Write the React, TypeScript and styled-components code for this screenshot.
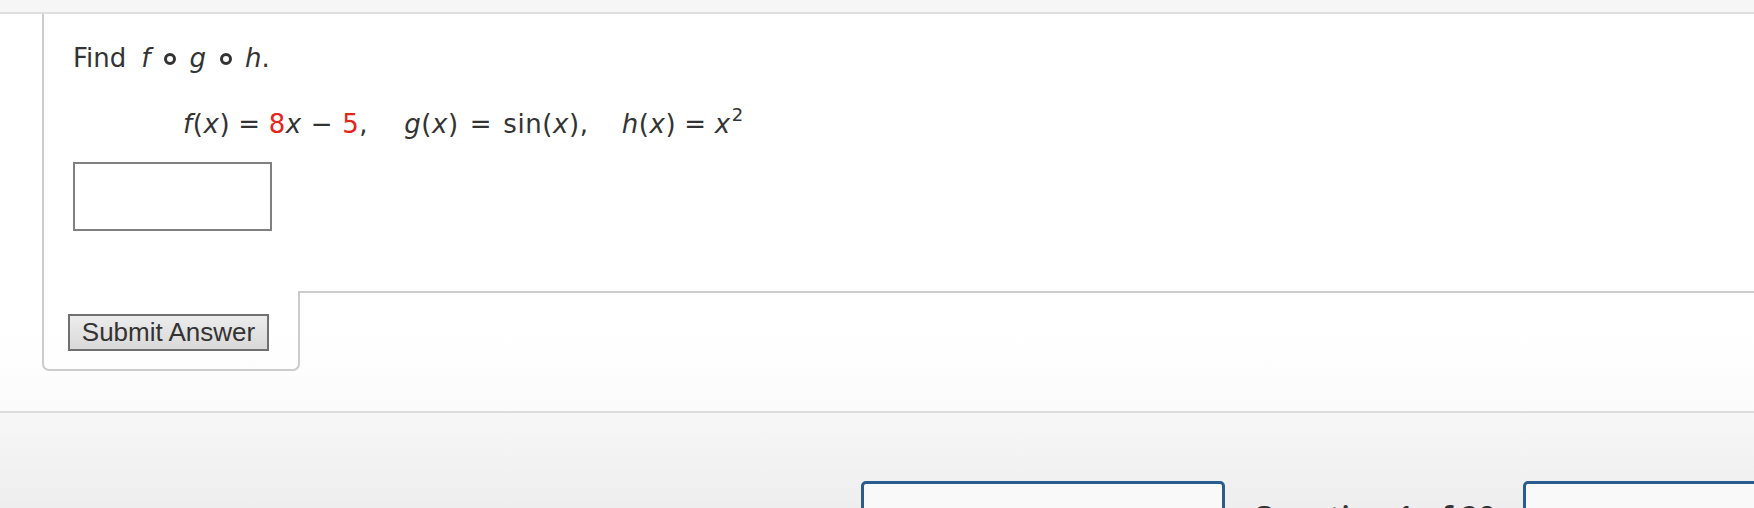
import React from "react";
import styled, { createGlobalStyle } from "styled-components";

const GlobalStyle = createGlobalStyle`
  html, body {
    margin: 0;
    padding: 0;
    background: #ffffff;
    overflow: hidden;
  }
  body {
    font-family: "DejaVu Sans", Verdana, sans-serif;
    color: #333333;
  }
`;

const Page = styled.div`
  width: 1754px;
  height: 508px;
  overflow: hidden;
`;

const TopBand = styled.div`
  height: 12px;
  background: #f6f6f6;
  border-bottom: 2px solid #dedede;
`;

const Main = styled.div`
  padding: 0 0 40px 42px;
  background: linear-gradient(#ffffff 80%, #fbfbfb);
  border-bottom: 2px solid #dcdcdc;
`;

const Card = styled.div`
  display: flex;
  flex-direction: column;
`;

const Question = styled.div`
  box-sizing: border-box;
  height: 277px;
  padding: 26px 0 0 29px;
  border-left: 2px solid #cccccc;
`;

const Prompt = styled.div`
  font-size: 26px;
  line-height: 36px;
  white-space: nowrap;
`;

const Formula = styled.div`
  margin-top: 30px;
  padding-left: 110px;
  font-size: 26px;
  line-height: 36px;
  letter-spacing: 0.6px;
  white-space: nowrap;
`;

const Var = styled.span`
  font-style: italic;
`;

const Red = styled.span`
  color: #e3261b;
`;

const Rel = styled.span<{ $gap?: number }>`
  margin: 0 ${({ $gap }) => $gap ?? 7}px;
`;

const Sep = styled.span<{ $w: number }>`
  display: inline-block;
  width: ${({ $w }) => $w}px;
`;

const Sup = styled.sup`
  font-size: 18px;
  line-height: 0;
  vertical-align: 12px;
  margin-left: 1px;
`;

const Ring = styled.span`
  display: inline-block;
  box-sizing: border-box;
  width: 12px;
  height: 12px;
  border: 3px solid currentColor;
  border-radius: 50%;
  margin: 0 13px 0 14px;
  vertical-align: 2px;
`;

const AnswerInput = styled.input`
  display: block;
  box-sizing: border-box;
  width: 199px;
  height: 69px;
  margin-top: 20px;
  border: 2px solid #808080;
  border-radius: 0;
  background: #ffffff;
  outline: none;
`;

const FooterRow = styled.div`
  display: flex;
  height: 80px;
`;

const SubmitCell = styled.div`
  box-sizing: border-box;
  width: 258px;
  padding: 23px 0 0 24px;
  border: 2px solid #cccccc;
  border-top: none;
  border-radius: 0 0 7px 7px;
`;

const Filler = styled.div`
  flex: 1;
  border-top: 2px solid #cccccc;
`;

const SubmitButton = styled.button`
  box-sizing: border-box;
  width: 201px;
  height: 37px;
  padding: 0;
  border: 2px solid #707070;
  border-radius: 0;
  background: linear-gradient(#ececec, #d9d9d9);
  color: #333333;
  font-family: "Liberation Sans", Arial, sans-serif;
  font-size: 26px;
  line-height: 33px;
`;

const Footer = styled.div`
  display: flex;
  align-items: flex-start;
  gap: 27px;
  height: 95px;
  box-sizing: border-box;
  padding: 68px 0 0 861px;
  background: linear-gradient(#f7f7f7, #eeeeee);
  overflow: hidden;
`;

const NavButton = styled.button`
  flex-shrink: 0;
  box-sizing: border-box;
  width: 364px;
  height: 70px;
  padding: 17px 36px 0;
  border: 3px solid #2a5d8f;
  border-radius: 5px;
  background: #f9f9f9;
  color: #444444;
  font-family: "Liberation Sans", Arial, sans-serif;
  font-size: 24px;
  line-height: 24px;
  text-align: center;
  white-space: nowrap;
`;

const Counter = styled.div`
  flex-shrink: 0;
  margin-top: 20px;
  font-family: "Open Sans", sans-serif;
  font-weight: 600;
  font-size: 31px;
  line-height: 31px;
  color: #333333;
  white-space: nowrap;
`;

export default function App() {
  return (
    <Page>
      <GlobalStyle />
      <TopBand />
      <Main>
        <Card>
          <Question>
            <Prompt>
              Find<Sep $w={15} />
              <Var>f</Var>
              <Ring />
              <Var>g</Var>
              <Ring />
              <Var>h</Var>.
            </Prompt>
            <Formula>
              <Var>f</Var>(<Var>x</Var>)<Rel $gap={8}>=</Rel>
              <Red>8</Red>
              <Var>x</Var>
              <Rel $gap={9}>−</Rel>
              <Red>5</Red>,<Sep $w={36} />
              <Var>g</Var>(<Var>x</Var>)<Rel $gap={11}>=</Rel>sin(<Var>x</Var>),<Sep $w={33} />
              <Var>h</Var>(<Var>x</Var>)<Rel $gap={8}>=</Rel>
              <Var>x</Var>
              <Sup>2</Sup>
            </Formula>
            <AnswerInput type="text" aria-label="answer" />
          </Question>
          <FooterRow>
            <SubmitCell>
              <SubmitButton type="button">Submit Answer</SubmitButton>
            </SubmitCell>
            <Filler />
          </FooterRow>
        </Card>
      </Main>
      <Footer>
        <NavButton type="button">Previous Question</NavButton>
        <Counter>Question 1 of 20</Counter>
        <NavButton type="button">Next Question</NavButton>
      </Footer>
    </Page>
  );
}
